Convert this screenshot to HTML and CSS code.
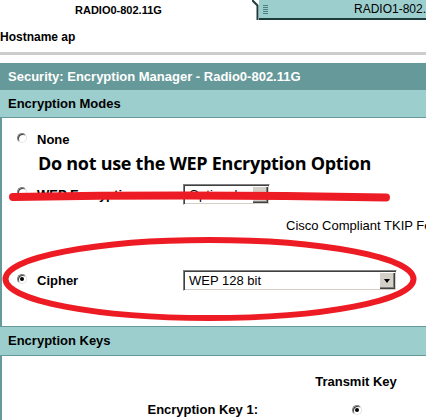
FILE: index.html
```html
<!DOCTYPE html>
<html>
<head>
<meta charset="utf-8">
<link rel="stylesheet" href="styles.css">
</head>
<body>
<div class="page">
  <div class="tabs">
    <div class="tab-active">RADIO0-802.11G</div>
    <svg class="tab-corner" width="7" height="20" viewBox="0 0 7 20"><polyline points="0,0 5.5,5.5 5.5,20" fill="none" stroke="#1e3c3c" stroke-width="2"/></svg>
    <div class="tab-other"><span class="grip"></span><span class="tab-label">RADIO1-802.11A</span></div>
  </div>
  <div class="hostname">Hostname ap</div>
  <div class="rule"></div>
  <div class="panel">
    <div class="panel-title">Security: Encryption Manager - Radio0-802.11G</div>
    <div class="section-head">Encryption Modes</div>
    <div class="section-body modes">
      <div class="mode-row row-none">
        <span class="radio"></span>
        <span class="mode-label">None</span>
      </div>
      <div class="warning">Do not use the WEP Encryption Option</div>
      <div class="mode-row row-wep">
        <span class="radio"></span>
        <span class="mode-label">WEP Encryption</span>
        <div class="select select-small"><span class="select-value">Optional</span><span class="select-btn"><span class="arrow"></span></span></div>
      </div>
      <div class="cisco">Cisco Compliant TKIP Features: Enable Message Integrity Check (MIC)</div>
      <div class="mode-row row-cipher">
        <span class="radio checked"></span>
        <span class="mode-label">Cipher</span>
        <div class="select select-wide"><span class="select-value">WEP 128 bit</span><span class="select-btn"><span class="arrow"></span></span></div>
      </div>
    </div>
    <div class="section-head keys-head">Encryption Keys</div>
    <div class="section-body keys">
      <div class="keys-grid">
        <span></span>
        <span class="keys-col-title">Transmit Key</span>
        <span class="key-label">Encryption Key 1:</span>
        <span class="key-radio"><span class="radio checked"></span></span>
      </div>
    </div>
  </div>
  <svg class="annotations" width="426" height="420" viewBox="0 0 426 420">
    <path d="M13 197 Q 200 194 386 197.5" fill="none" stroke="#ed1c24" stroke-width="8" stroke-linecap="round"/>
    <ellipse cx="209.5" cy="279" rx="204" ry="39" fill="none" stroke="#ed1c24" stroke-width="6"/>
  </svg>
</div>
</body>
</html>
```
FILE: styles.css
```css
html, body {
  margin: 0;
  padding: 0;
  overflow: hidden;
  background: #fff;
}
.page {
  position: relative;
  width: 426px;
  height: 420px;
  overflow: hidden;
  font-family: "Liberation Sans", Arial, sans-serif;
  color: #000;
}
.tabs {
  display: flex;
  height: 20px;
  white-space: nowrap;
}
.tab-active {
  width: 177px;
  padding-left: 75px;
  font-size: 11px;
  font-weight: bold;
  line-height: 20px;
  flex: none;
}
.tab-corner {
  flex: none;
  display: block;
}
.tab-other {
  flex: 1;
  display: flex;
  align-items: center;
  background: #9ccece;
  border-bottom: 2px solid #1e3c3c;
  height: 18px;
  overflow: hidden;
}
.grip {
  flex: none;
  width: 5px;
  height: 10px;
  margin-left: 4px;
  margin-top: 2px;
  background: repeating-linear-gradient(to bottom, #4d7f7f 0, #4d7f7f 1px, transparent 1px, transparent 2px);
}
.tab-label {
  margin-left: 86px;
  font-size: 12px;
  line-height: 16px;
}
.hostname {
  padding-top: 7px;
  font-size: 12px;
  font-weight: bold;
  line-height: 20px;
}
.rule {
  margin-top: 5px;
  height: 3px;
  background: #cccccc;
}
.panel {
  margin-top: 8px;
}
.panel-title {
  height: 27px;
  line-height: 27px;
  padding-left: 8px;
  background: #669999;
  color: #fff;
  font-size: 13px;
  font-weight: bold;
  white-space: nowrap;
}
.section-head {
  height: 27px;
  line-height: 27px;
  padding-left: 8px;
  background: #9ccece;
  border-bottom: 1px solid #669999;
  font-size: 13px;
  font-weight: bold;
}
.keys-head {
  height: 28px;
  line-height: 28px;
  border-top: 1px solid #669999;
}
.section-body {
  border-left: 2px solid #669999;
}
.modes {
  padding-top: 12px;
  padding-bottom: 35px;
}
.mode-row {
  display: flex;
  align-items: center;
  white-space: nowrap;
}
.row-none {
  height: 20px;
}
.row-wep {
  height: 21px;
  margin-top: 9px;
}
.row-cipher {
  height: 21px;
  margin-top: 36px;
}
.radio {
  position: relative;
  flex: none;
  display: block;
  box-sizing: border-box;
  width: 10px;
  height: 10px;
  border-radius: 50%;
  border: 1px solid;
  border-color: #808080 #e4e4e4 #e4e4e4 #808080;
  background: #fff;
  box-shadow: inset 1px 1px 0 #404040;
}
.radio.checked::after {
  content: "";
  position: absolute;
  left: 2px;
  top: 2px;
  width: 4px;
  height: 4px;
  border-radius: 50%;
  background: #000;
}
.mode-row .radio {
  margin-left: 15px;
  margin-right: 10px;
  margin-bottom: 5px;
}
.row-cipher .radio {
  margin-bottom: 3px;
}
.mode-label {
  width: 146px;
  flex: none;
  font-size: 13px;
  font-weight: bold;
  line-height: 20px;
}
.warning {
  margin-top: 1px;
  margin-left: 36px;
  height: 24px;
  line-height: 24px;
  font-family: "Open Sans", "Noto Sans", sans-serif;
  font-size: 18px;
  font-weight: bold;
  letter-spacing: -0.28px;
  white-space: nowrap;
}
.cisco {
  margin-top: 13px;
  margin-left: 284px;
  height: 16px;
  line-height: 16px;
  font-size: 13px;
  white-space: nowrap;
}
.select {
  flex: none;
  display: flex;
  box-sizing: border-box;
  height: 21px;
  border: 1px solid;
  border-color: #808080 #ffffff #ffffff #808080;
  box-shadow: inset 1px 1px 0 #404040, inset -1px -1px 0 #d4d0c8;
  padding: 1px;
  background: #fff;
}
.select-small {
  width: 87px;
}
.select-wide {
  width: 214px;
}
.select-value {
  flex: 1;
  padding-left: 4px;
  font-size: 13px;
  line-height: 17px;
  overflow: hidden;
}
.select-btn {
  flex: none;
  width: 16px;
  height: 17px;
  display: flex;
  align-items: center;
  justify-content: center;
  background: #d4d0c8;
  box-shadow: inset 1px 1px 0 #ffffff, inset -1px -1px 0 #404040, inset -2px -2px 0 #808080;
}
.arrow {
  width: 0;
  height: 0;
  border-left: 3.5px solid transparent;
  border-right: 3.5px solid transparent;
  border-top: 4px solid #000;
}
.keys {
  padding-top: 16px;
  height: 64px;
}
.keys-grid {
  display: grid;
  grid-template-columns: 256px 196px;
  grid-template-rows: 20px 20px;
  row-gap: 8px;
  font-size: 13px;
  font-weight: bold;
  line-height: 20px;
  white-space: nowrap;
}
.keys-col-title {
  text-align: center;
}
.key-label {
  text-align: right;
}
.key-radio {
  display: flex;
  align-items: center;
  justify-content: center;
  padding-left: 2px;
}
.annotations {
  position: absolute;
  left: 0;
  top: 0;
  pointer-events: none;
}
```
